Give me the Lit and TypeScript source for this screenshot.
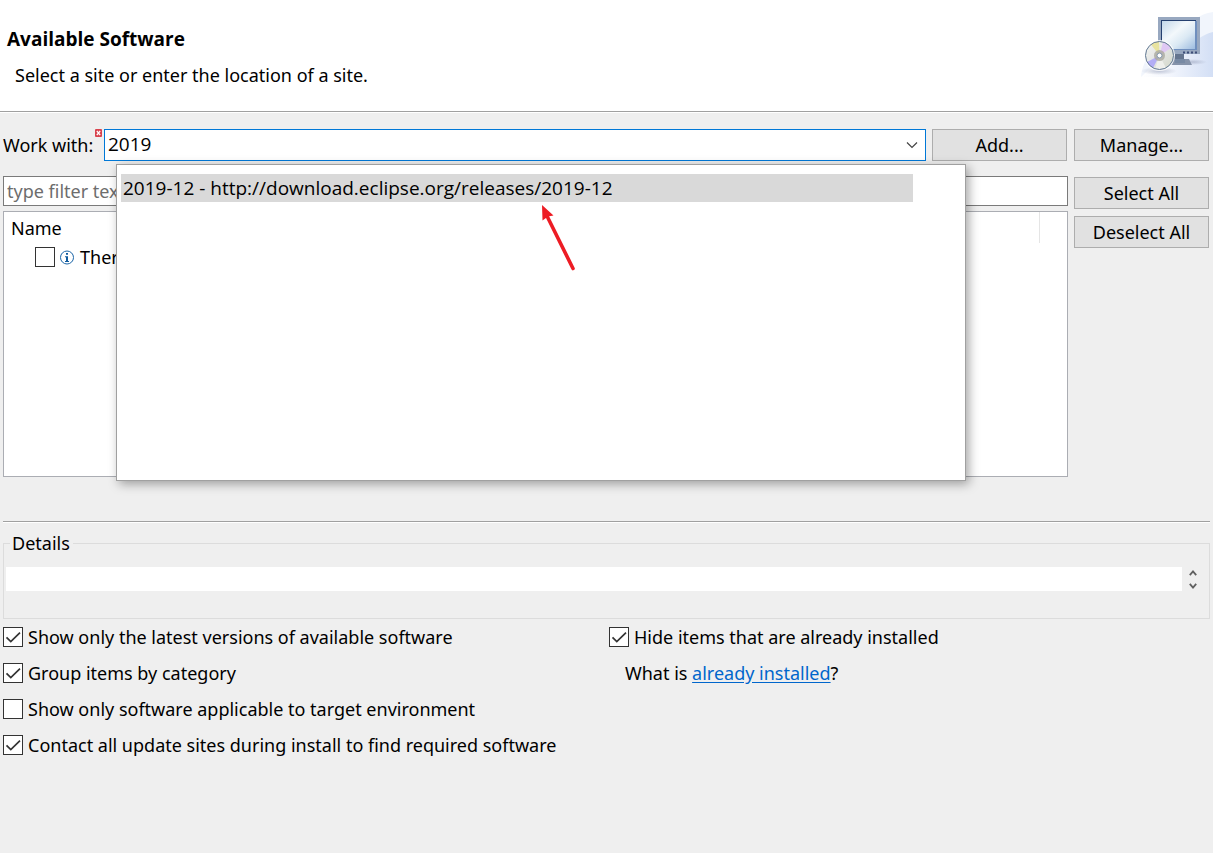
import { LitElement, html, css, svg } from "lit";
import { customElement, property, state } from "lit/decorators.js";

interface Option {
  id: string;
  label: string;
  checked: boolean;
}

/** Square tick box with its label. */
@customElement("check-option")
class CheckOption extends LitElement {
  @property() label = "";
  @property({ type: Boolean }) checked = false;

  static styles = css`
    :host {
      display: block;
    }
    .option {
      display: flex;
      align-items: center;
      gap: 5px;
      height: 24px;
    }
    .box {
      appearance: none;
      flex: none;
      box-sizing: border-box;
      width: 20px;
      height: 20px;
      margin: 0;
      border: 1px solid #333;
      background: #fff;
    }
    .box:checked {
      background: #fff
        url("data:image/svg+xml,%3Csvg xmlns='http://www.w3.org/2000/svg' viewBox='0 0 18 18'%3E%3Cpath d='M2.5 9.3l4.3 4.3L16 4.6' fill='none' stroke='%23333' stroke-width='1.7'/%3E%3C/svg%3E");
    }
  `;

  render() {
    return html`<label class="option">
      <input class="box" type="checkbox" .checked=${this.checked} />
      <span>${this.label}</span>
    </label>`;
  }
}

@customElement("app-root")
class AppRoot extends LitElement {
  @state() private query = "2019";
  @state() private sites = ["2019-12 - http://download.eclipse.org/releases/2019-12"];

  private left: Option[] = [
    { id: "latest", label: "Show only the latest versions of available software", checked: true },
    { id: "group", label: "Group items by category", checked: true },
    { id: "target", label: "Show only software applicable to target environment", checked: false },
    { id: "contact", label: "Contact all update sites during install to find required software", checked: true },
  ];

  static styles = css`
    :host {
      display: block;
      min-height: 100vh;
      background: #efefef;
      color: #000;
      font: 18px/24px "Noto Sans", "Open Sans", sans-serif;
    }
    * {
      box-sizing: border-box;
    }
    input,
    button {
      font: inherit;
      color: inherit;
      border-radius: 0;
    }
    .banner {
      display: flex;
      justify-content: space-between;
      align-items: flex-start;
      height: 113px;
      padding-top: 12px;
      background: #fff;
      border-bottom: 1px solid #fff;
      box-shadow: inset 0 -1px #a0a0a0;
    }
    .titles {
      padding: 15px 0 0 7px;
    }
    h1 {
      margin: 0;
      font-family: "Open Sans", "Noto Sans", sans-serif;
      font-size: 19px;
      line-height: 24px;
      font-weight: 700;
    }
    .titles p {
      margin: 12px 0 0 8px;
    }
    .art {
      display: block;
      width: 72px;
      height: 65px;
    }
    .content {
      padding: 16px 3px 0;
    }
    .site-row {
      display: grid;
      grid-template-columns: 101px 1fr 6px 135px 7px 135px;
      padding-right: 1px;
    }
    .site-row .push {
      grid-column: 4;
    }
    .site-row .push.last {
      grid-column: 6;
    }
    .site-label {
      display: flex;
      white-space: nowrap;
    }
    .site-label label {
      padding-top: 4px;
      width: 92px;
    }
    .error {
      flex: none;
      width: 8px;
      height: 8px;
    }
    .combo {
      position: relative;
      display: flex;
      height: 32px;
      border: 1px solid #0078d7;
      background: #fff;
      font-family: "Open Sans", "Noto Sans", sans-serif;
      font-size: 19px;
    }
    .combo-input {
      flex: 1;
      min-width: 0;
      padding: 0 3px 2px;
      border: 0;
      outline: 0;
      background: none;
    }
    .drop {
      display: grid;
      place-items: center;
      width: 26px;
      padding: 0;
      border: 0;
      background: none;
    }
    .drop svg {
      width: 12px;
      height: 8px;
    }
    .popup {
      position: absolute;
      z-index: 2;
      top: 34px;
      left: 11px;
      right: -41px;
      height: 317px;
      padding: 9px 52px 0 4px;
      border: 1px solid #a0a0a0;
      background: #fff;
      box-shadow: 3px 3px 10px rgba(0, 0, 0, 0.35);
    }
    .matches {
      margin: 0;
      padding: 0;
      list-style: none;
    }
    .match {
      height: 28px;
      padding: 2px;
      background: #d9d9d9;
      white-space: nowrap;
    }
    .arrow {
      position: absolute;
      top: 40px;
      left: 424px;
      width: 36px;
      height: 68px;
    }
    .push {
      width: 100%;
      height: 32px;
      padding: 0;
      border: 1px solid #adadad;
      background: #e1e1e1;
    }
    .browse {
      display: grid;
      grid-template-columns: 1fr 135px;
      gap: 6px;
      margin-top: 15px;
      padding-right: 1px;
    }
    .tree {
      display: flex;
      flex-direction: column;
      gap: 5px;
    }
    .filter {
      width: 100%;
      height: 30px;
      padding: 0 3px;
      border: 1px solid #7a7a7a;
      background: #fff;
    }
    .filter::placeholder {
      color: #6d6d6d;
      opacity: 1;
    }
    .list {
      height: 266px;
      border: 1px solid #abadb3;
      background: #fff;
    }
    .table {
      width: 100%;
      border-collapse: collapse;
      table-layout: fixed;
    }
    .table th {
      height: 31px;
      padding: 0 7px;
      text-align: left;
      font-weight: 400;
      border-right: 1px solid #e5e5e5;
    }
    .table .rest {
      width: 28px;
      border: 0;
    }
    .table td {
      padding: 2px 0 0 31px;
    }
    .entry {
      display: flex;
      align-items: center;
      gap: 5px;
    }
    .tick {
      appearance: none;
      width: 20px;
      height: 20px;
      margin: 0;
      border: 1px solid #333;
      background: #fff;
    }
    .info {
      width: 15px;
      height: 15px;
    }
    .side {
      display: flex;
      flex-direction: column;
      gap: 7px;
      padding-top: 1px;
    }
    .rule {
      height: 2px;
      margin: 44px 0 0;
      border: 0;
      border-top: 1px solid #a0a0a0;
      background: #fff;
    }
    .details {
      display: flex;
      margin: 8px 0 0;
      padding: 12px 2px 27px;
      border: 1px solid #dcdcdc;
      min-width: 0;
    }
    .details legend {
      margin-left: 4px;
      padding: 0 3px 0 2px;
    }
    .details-text {
      flex: 1;
      min-width: 0;
      height: 24px;
      border: 0;
      background: #fff;
    }
    .spin {
      display: flex;
      flex-direction: column;
      align-items: flex-start;
      justify-content: center;
      gap: 6px;
      width: 25px;
      padding-left: 7px;
    }
    .spin button {
      display: block;
      padding: 0;
      border: 0;
      background: none;
      line-height: 0;
    }
    .spin svg {
      width: 8px;
      height: 6px;
    }
    .options {
      display: grid;
      grid-template-columns: 1fr 1fr;
      column-gap: 5px;
      padding-top: 6px;
    }
    .column {
      display: flex;
      flex-direction: column;
      gap: 12px;
    }
    .installed {
      margin: 0;
      padding-left: 16px;
    }
    .installed a {
      color: #0066cc;
      text-decoration: underline;
      text-underline-offset: 2px;
    }
  `;

  private art() {
    return svg`<svg class="art" viewBox="0 0 72 65" aria-hidden="true">
      <defs>
        <linearGradient id="sky" x1="0" x2="1"><stop offset="0" stop-color="#fff"/><stop offset=".4" stop-color="#f3f6fd"/><stop offset="1" stop-color="#d3dff5"/></linearGradient>
        <linearGradient id="screen" x1="0" y1="0" x2="1" y2="1"><stop offset="0" stop-color="#c3d8ea"/><stop offset=".4" stop-color="#f3f8fb"/><stop offset=".65" stop-color="#dbe9f4"/><stop offset="1" stop-color="#9dbce0"/></linearGradient>
        <linearGradient id="disc" x1="0" y1="0" x2="1" y2="1"><stop offset="0" stop-color="#f4f5f2"/><stop offset=".5" stop-color="#e3e5e3"/><stop offset="1" stop-color="#d3d8c8"/></linearGradient>
        <radialGradient id="shade"><stop offset="0" stop-color="#9aa3bd" stop-opacity=".6"/><stop offset="1" stop-color="#9aa3bd" stop-opacity="0"/></radialGradient>
      </defs>
      <path d="M72 0C58 2 50 10 34 22C14 32 2 46 0 65H72Z" fill="#eef2fb" opacity=".8"/>
      <path d="M72 20C56 24 50 36 22 44L0 65H72Z" fill="url(#sky)"/>
      <ellipse cx="52" cy="50" rx="14" ry="3" fill="url(#shade)"/>
      <ellipse cx="18" cy="59" rx="18" ry="4" fill="url(#shade)"/>
      <path d="M34 42h9v5h5l3 6H30z" fill="#8693aa"/><path d="M34 42h9v5h-9z" fill="#65758f"/><path d="M34 47h10v4H34z" fill="#788aa4"/>
      <path d="M17 5h42v37H17z" fill="#98a8c0"/>
      <path d="M20 8h35v30H20z" fill="#25406f"/>
      <path d="M21 9h35v29H21z" fill="#6f8fbe"/>
      <path d="M21 9h33v28H21z" fill="url(#screen)"/>
      <path d="M42 40.500h14" stroke="#3d4d78" stroke-width="2" stroke-dasharray="2 2"/>
      <circle cx="18.500" cy="43.500" r="15.400" fill="#fff" opacity=".8"/>
      <circle cx="18.500" cy="43.500" r="14" fill="url(#disc)"/>
      <path d="M18.500 43.500L10 32.500A14 14 0 0 1 18 29.500z" fill="#e8e3a0"/>
      <path d="M18.500 43.500L22 30A14 14 0 0 1 30 36z" fill="#dfc8f4"/>
      <path d="M18.500 43.500L6 50A14 14 0 0 0 12 56z" fill="#b3aef5"/>
      <path d="M18.500 43.500L14 57A14 14 0 0 0 25 56z" fill="#eff0ec"/>
      <circle cx="18.500" cy="43.500" r="14" fill="none" stroke="#607792" stroke-width="1"/>
      <circle cx="18.500" cy="43.500" r="5.500" fill="#aaa99f" opacity=".8"/>
      <circle cx="18.500" cy="43.500" r="2.500" fill="#fff" stroke="#8397ad" stroke-width="1"/>
    </svg>`;
  }

  render() {
    return html`
      <header class="banner">
        <div class="titles">
          <h1>Available Software</h1>
          <p>Select a site or enter the location of a site.</p>
        </div>
        ${this.art()}
      </header>
      <main class="content">
        <div class="site-row">
          <div class="site-label">
            <label for="site">Work with:</label>
            <svg class="error" viewBox="0 0 8 8" aria-hidden="true">
              <rect width="7" height="8" rx="1" fill="#d9434e" />
              <path d="M1.800 2l3.400 4M5.200 2L1.800 6" stroke="#fff" stroke-width="1.200" />
            </svg>
          </div>
          <div class="combo">
            <input class="combo-input" id="site" type="text" .value=${this.query} />
            <button class="drop" type="button" aria-label="Show sites">
              <svg viewBox="0 0 12 8"><path d="M1 1.500l5 5 5-5" fill="none" stroke="#444" stroke-width="1.200" /></svg>
            </button>
            <div class="popup">
              <ul class="matches" role="listbox" aria-label="Sites">
                ${this.sites.map((s) => html`<li class="match" role="option" aria-selected="true">${s}</li>`)}
              </ul>
              <svg class="arrow" viewBox="0 0 36 68" aria-hidden="true">
                <path d="M6 11L32 63.500" stroke="#ed1c24" stroke-width="3.600" stroke-linecap="round" />
                <path d="M1 0L12.500 10.500L7 11.500L1.500 15.500Z" fill="#ed1c24" />
              </svg>
            </div>
          </div>
          <button class="push" type="button">Add...</button>
          <button class="push last" type="button">Manage...</button>
        </div>

        <div class="browse">
          <div class="tree">
            <input class="filter" type="text" placeholder="type filter text" aria-label="Filter" />
            <div class="list">
              <table class="table">
                <thead>
                  <tr><th>Name</th><th class="rest"></th></tr>
                </thead>
                <tbody>
                  <tr>
                    <td colspan="2">
                      <label class="entry">
                        <input class="tick" type="checkbox" />
                        <svg class="info" viewBox="0 0 15 15" aria-hidden="true">
                          <circle cx="7" cy="7.500" r="6.500" fill="#fff" stroke="#1c66a8" />
                          <path d="M6 3h2v1.800h-2zM5 6.200h3V11h1v1h-4v-1h1V7.200h-1z" fill="#0f5a9e" />
                        </svg>
                        <span>There is no site selected.</span>
                      </label>
                    </td>
                  </tr>
                </tbody>
              </table>
            </div>
          </div>
          <div class="side">
            <button class="push" type="button">Select All</button>
            <button class="push" type="button">Deselect All</button>
          </div>
        </div>

        <hr class="rule" />

        <fieldset class="details">
          <legend>Details</legend>
          <input class="details-text" type="text" readonly aria-label="Details" />
          <div class="spin">
            <button type="button" aria-label="Scroll up">
              <svg viewBox="0 0 8 6"><path d="M.8 5.200L4 1.500l3.200 3.700" fill="none" stroke="#606060" stroke-width="1.800" /></svg>
            </button>
            <button type="button" aria-label="Scroll down">
              <svg viewBox="0 0 8 6"><path d="M.8 .8L4 4.500 7.200 .8" fill="none" stroke="#606060" stroke-width="1.800" /></svg>
            </button>
          </div>
        </fieldset>

        <div class="options">
          <div class="column">
            ${this.left.map((o) => html`<check-option .label=${o.label} .checked=${o.checked}></check-option>`)}
          </div>
          <div class="column">
            <check-option .label=${"Hide items that are already installed"} .checked=${true}></check-option>
            <p class="installed">What is <a href="#installed">already installed</a>?</p>
          </div>
        </div>
      </main>
    `;
  }
}
